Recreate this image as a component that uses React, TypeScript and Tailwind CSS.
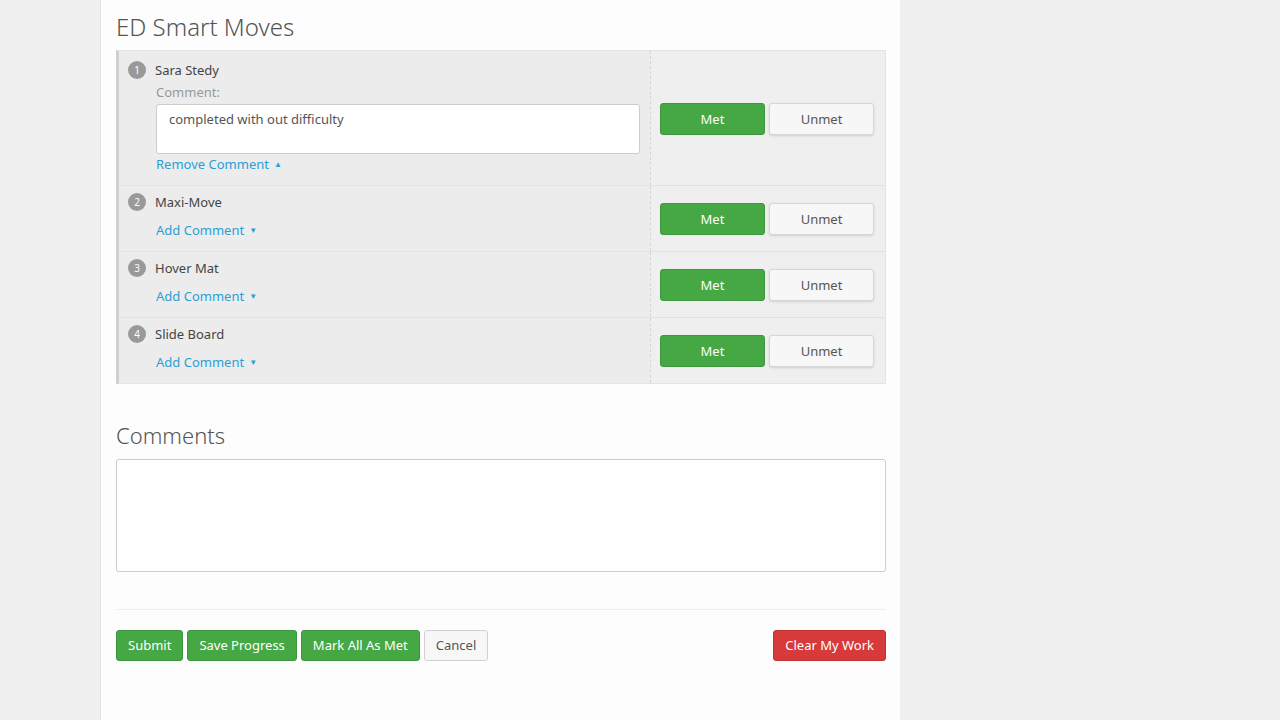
const items = [
  { n: 1, name: 'Sara Stedy', comment: 'completed with out difficulty' },
  { n: 2, name: 'Maxi-Move' },
  { n: 3, name: 'Hover Mat' },
  { n: 4, name: 'Slide Board' },
]

function Row({ item, last }: { item: { n: number; name: string; comment?: string }; last: boolean }) {
  const open = item.comment !== undefined
  return (
    <div className={`flex leading-[18px] ${last ? '' : 'border-b border-[#e2e2e2]'}`}>
      <div className={`w-[531px] bg-[#ececec] pl-[9px] pr-[10px] ${open ? 'pt-[10px] pb-[12px]' : 'pt-[7px] pb-[12px]'}`}>
        <div className="flex items-center gap-[9px]">
          <span className="w-[18px] h-[18px] rounded-full bg-[#999] text-white text-[10px] flex items-center justify-center">{item.n}</span>
          <span className="text-[13px] text-[#444]">{item.name}</span>
        </div>
        <div className="pl-[28px]">
          {open && (
            <>
              <div className="text-[13px] text-[#999] mt-[4px]">Comment:</div>
              <div className="mt-[3px] h-[50px] bg-white border border-[#ccc] rounded-[3px] px-[12px] pt-[5px] text-[13px] text-[#555]">
                {item.comment}
              </div>
            </>
          )}
          <div className={`${open ? 'mt-[1px]' : 'mt-[10px]'} text-[13px] text-[#2a9fd6] flex items-center gap-[5px]`}>
            {open ? 'Remove Comment' : 'Add Comment'}
            <span className="text-[8px]">{open ? '▲' : '▼'}</span>
          </div>
        </div>
      </div>
      <div className="flex-1 bg-[#efefef] border-l border-dashed border-[#d5d5d5] pl-[9px] pr-[11px] flex items-start">
        <div className={`flex gap-[4px] ${open ? 'mt-[52px]' : 'mt-[17px]'}`}>
          <button className="w-[105px] h-[32px] rounded-[3px] bg-[#45a845] border border-[#3d963d] text-white text-[13px]">Met</button>
          <button className="w-[105px] h-[32px] rounded-[3px] bg-[#f7f7f7] border border-[#d6d6d6] text-[#555] text-[13px] shadow-sm">Unmet</button>
        </div>
      </div>
    </div>
  )
}

export default function App() {
  return (
    <div className="min-h-screen bg-[#f0f0f0] font-['Open_Sans',sans-serif]">
      <div className="ml-[100px] w-[800px] min-h-[720px] bg-[#fdfdfd] border-l border-[#e4e4e4] px-[15px]">
        <h1 className="text-[24px] font-light text-[#555] pt-[11px] h-[50px] leading-[32px]">ED Smart Moves</h1>
        <div className="w-[770px] border-l-[3px] border-[#cfcfcf] border-y border-r border-y-[#e4e4e4] border-r-[#e4e4e4]">
          {items.map((it, i) => (
            <Row key={it.n} item={it} last={i === items.length - 1} />
          ))}
        </div>
        <h2 className="text-[22px] font-light text-[#555] mt-[36px] leading-[30px]">Comments</h2>
        <div className="mt-[9px] w-[770px] h-[113px] bg-white border border-[#ccc] rounded-[3px]"></div>
        <div className="mt-[37px] w-[770px] border-t border-[#eee]"></div>
        <div className="mt-[20px] w-[770px] flex items-center">
          <div className="flex gap-[4px]">
            <button className="h-[31px] px-[11px] rounded-[3px] bg-[#45a845] border border-[#3d963d] text-white text-[13px]">Submit</button>
            <button className="h-[31px] px-[11px] rounded-[3px] bg-[#45a845] border border-[#3d963d] text-white text-[13px]">Save Progress</button>
            <button className="h-[31px] px-[11px] rounded-[3px] bg-[#45a845] border border-[#3d963d] text-white text-[13px]">Mark All As Met</button>
            <button className="h-[31px] px-[11px] rounded-[3px] bg-[#f7f7f7] border border-[#d0d0d0] text-[#555] text-[13px]">Cancel</button>
          </div>
          <button className="ml-auto h-[31px] px-[11px] rounded-[3px] bg-[#d63a3a] border border-[#c23030] text-white text-[13px]">Clear My Work</button>
        </div>
      </div>
    </div>
  )
}
